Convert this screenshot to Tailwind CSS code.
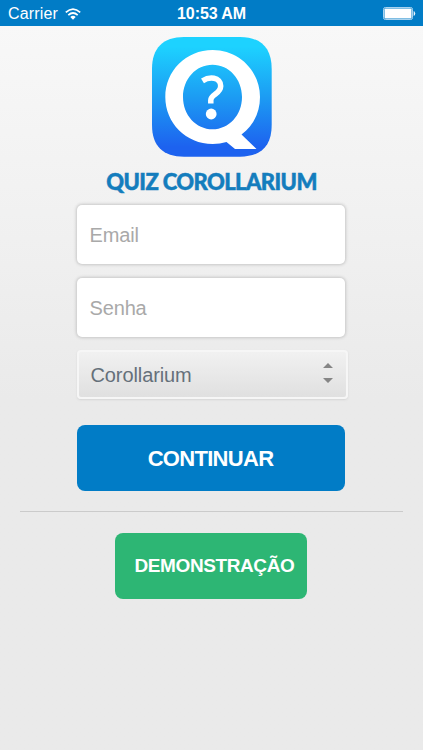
<!DOCTYPE html>
<html lang="pt"><head><meta charset="utf-8"><title>Quiz Corollarium</title>
<script src="https://cdn.jsdelivr.net/npm/@tailwindcss/browser@4"></script></head>
<body class="h-[750px] overflow-hidden bg-linear-to-b from-[#f8f8f8] from-[26px] to-[#eaeaea] to-[400px] font-['Liberation_Sans',sans-serif]">
<header class="grid h-[26px] grid-cols-3 items-center bg-[#017cc6] text-white">
  <div class="flex items-center gap-[7px] pl-2 pt-0.5">
    <span class="text-[16px] leading-6 tracking-[0.15px]">Carrier</span>
    <svg class="h-3 w-4" viewBox="0 0 16 12" fill="none" stroke="white" stroke-width="1.700"><path d="M.8 4.400Q8-2.200 15.200 4.400M3.300 7.100Q8 2.900 12.700 7.100"/><path d="M5.300 9Q8 6.700 10.700 9L8 11.800Z" fill="white" stroke="none"/></svg>
  </div>
  <div class="pt-0.5 text-center text-[16px] leading-6 font-bold tracking-[-0.1px] whitespace-nowrap">10:53 AM</div>
  <div class="flex justify-end pr-[7px]">
    <svg class="h-[13px] w-[33px]" viewBox="0 0 33 13"><rect x=".5" y=".5" width="29" height="12" rx="1.8" fill="none" stroke="#a9d3ef"/><rect x="1.5" y="1.5" width="27" height="10" rx=".8" fill="white"/><path d="M31 4.5q1.8 2 0 4z" fill="white" stroke="white" stroke-width=".6"/></svg>
  </div>
</header>
<main class="flex flex-col items-center">
  <svg class="mt-[11px] h-[120px] w-[120px]" viewBox="0 0 120 120">
    <defs><linearGradient id="g" x2="0" y2="1"><stop offset=".08" stop-color="#1dd2ff"/><stop offset=".5" stop-color="#1c9cf3"/><stop offset=".92" stop-color="#1d62ef"/></linearGradient></defs>
    <path d="M32 0H88C109 0 119.700 11 119.700 32V88C119.700 109 109 119.700 88 119.700H32C11 119.700 0 109 0 88V32C0 11 11 0 32 0Z" fill="url(#g)"/>
    <path fill="white" fill-rule="evenodd" d="M60.700 13C87 13 108 34 108 60C108 76 101 89 89.500 97.500L104.500 112H83L74.500 105Q68 107 60.700 107C34 107 13.300 86 13.300 60S34 13 60.700 13ZM60.500 27.700C44 27.700 31 42 31 60S44 92.300 60.500 92.300S90 78 90 60S77 27.700 60.500 27.700Z"/>
    <path d="M50.500 43.800C55 41 59 40.800 62 41.300C66 42 68.700 44.800 68.700 49C68.700 57 58.800 57.300 58.800 63.200V66.500" fill="none" stroke="white" stroke-width="5.500"/>
    <circle cx="59.200" cy="77" r="5.400" fill="white"/>
  </svg>
  <h1 class="mt-[9px] h-8 text-[22px] leading-8 font-black tracking-[-0.6px] whitespace-nowrap text-[#147dbd] font-['Lato',sans-serif] [-webkit-text-stroke:0.5px_#147dbd]">QUIZ COROLLARIUM</h1>
  <form class="mt-[7px] mr-0.5 flex w-[268px] flex-col">
    <label class="h-[59px] rounded-[5px] bg-white px-[13px] text-[20px] leading-[60px] tracking-[-0.15px] text-[#a9a9a9] shadow-[0_0_3px_1px_#c7c7c7]">Email</label>
    <label class="mt-[14px] h-[59px] rounded-[5px] bg-white px-[13px] text-[20px] leading-[60px] tracking-[-0.15px] text-[#a9a9a9] shadow-[0_0_3px_1px_#c7c7c7]">Senha</label>
    <div class="mt-[13px] flex h-[49px] w-[271px] items-center justify-between rounded-[4px] border-2 border-[#f6f6f6] bg-linear-to-b from-[#f1f1f1] to-[#e0e0e0] pr-[13px] pl-3 text-[20px] tracking-[-0.1px] text-[#65707a] shadow-[0_1px_2px_#d5d5d5]">
      <span>Corollarium</span>
      <svg class="mb-1 h-5 w-[10px]" viewBox="0 0 10 20" fill="#858585"><path d="M5 0L10 5H0ZM0 15H10L5 20Z"/></svg>
    </div>
    <button type="button" class="mt-[26px] h-[66px] rounded-[8px] bg-[#017cc6] text-[22px] font-bold tracking-[-0.7px] text-white">CONTINUAR</button>
  </form>
  <hr class="mt-5 w-[383px] border-[#cbcbcb]">
  <button type="button" class="mt-[21px] mr-0.5 h-[66px] w-[192px] rounded-[8px] bg-[#2db674] pl-5 text-left text-[19px] font-bold tracking-[-0.4px] text-white">DEMONSTRAÇÃO</button>
</main>
</body></html>
